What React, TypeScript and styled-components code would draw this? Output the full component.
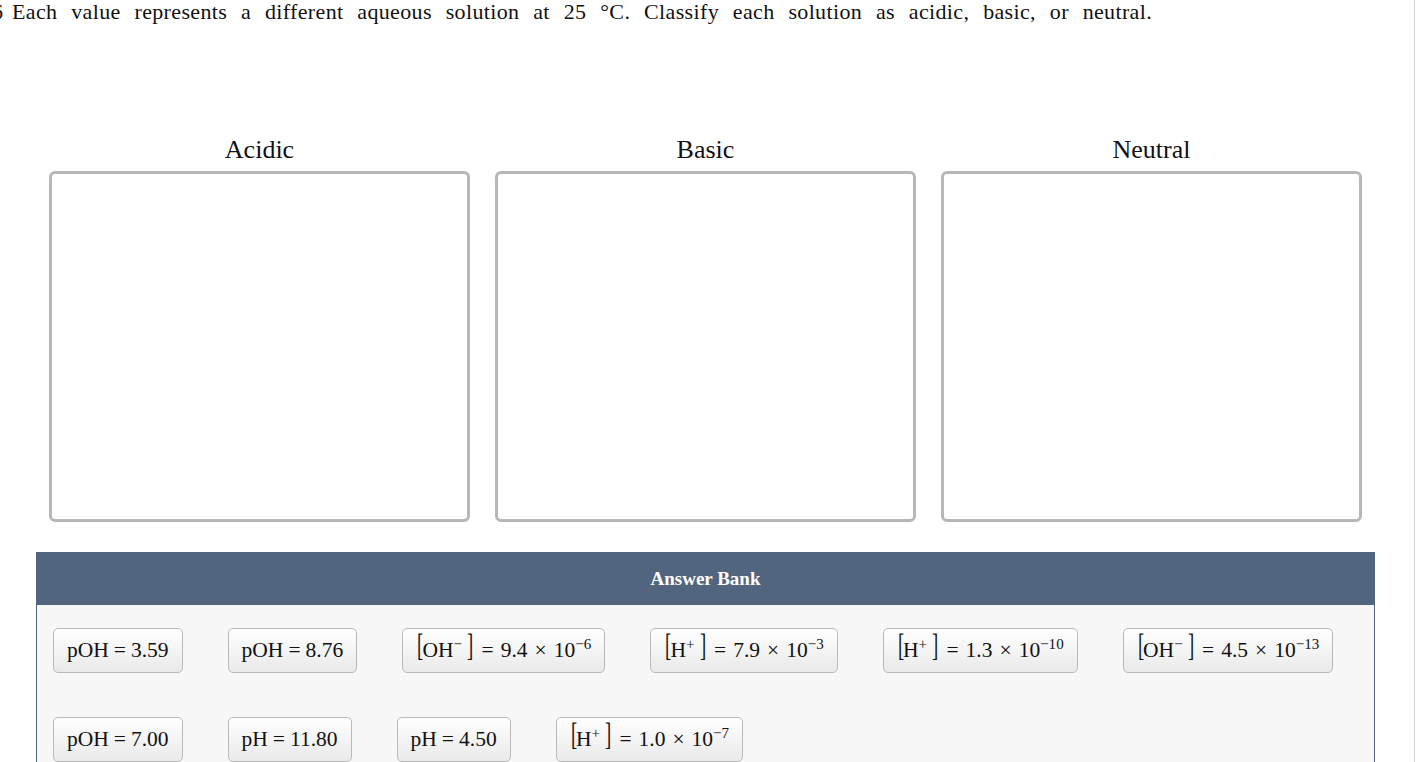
import React from 'react';
import styled, { createGlobalStyle } from 'styled-components';

const GlobalStyle = createGlobalStyle`
    html, body {
        margin: 0;
        padding: 0;
        background: #fff;
        overflow: hidden;
    }
    body {
        font-family: "Liberation Serif", "Times New Roman", serif;
        color: #111;
    }
`;

const Page = styled.div`
    width: 1414px;
    height: 762px;
    border-right: 1px solid #d4d4d4;
    overflow: hidden;
`;

const Prompt = styled.p`
    margin: 0;
    padding-top: 1px;
    font-size: 22px;
    line-height: 22px;
    letter-spacing: 0.35px;
    word-spacing: 8px;
    white-space: nowrap;
`;

const PromptNumber = styled.span`
    display: inline-block;
    margin-left: -8px;
    width: 20px;
`;

const Zones = styled.div`
    display: grid;
    grid-template-columns: repeat(3, 421px);
    column-gap: 25px;
    margin: 112px 0 0 49px;
`;

const Zone = styled.div`
    display: flex;
    flex-direction: column;
    align-items: center;
`;

const ZoneLabel = styled.div`
    font-size: 26px;
    line-height: 30px;
    margin-bottom: 6px;
`;

const DropBox = styled.div`
    box-sizing: border-box;
    width: 421px;
    height: 351px;
    border: 3px solid #b7b7b7;
    border-radius: 6px;
    background: #fff;
`;

const Bank = styled.section`
    box-sizing: border-box;
    width: 1339px;
    margin: 30px 0 0 36px;
    border-left: 1px solid #51667e;
    border-right: 1px solid #51667e;
    background: #f7f7f7;
`;

const BankHeader = styled.div`
    height: 53px;
    margin: 0 -1px;
    background: #51667e;
    color: #fff;
    font-size: 19px;
    font-weight: 600;
    display: flex;
    align-items: center;
    justify-content: center;
`;

const ChipArea = styled.div`
    display: flex;
    flex-direction: column;
    gap: 44px;
    padding: 23px 16px 24px;
`;

const ChipRow = styled.div`
    display: flex;
    gap: 45px;
`;

const Chip = styled.div`
    box-sizing: border-box;
    height: 45px;
    padding: 0 13px;
    display: flex;
    align-items: center;
    white-space: nowrap;
    border: 1px solid #b9b9b9;
    border-radius: 5px;
    background: linear-gradient(#ffffff, #e9e9e9);
    font-size: 21.5px;
`;

const Formula = styled.span`
    line-height: 22px;
    padding-bottom: 1px;
`;

// tall thin brackets; line-height 0 keeps them out of the line box
const Bracket = styled.span<{ $close?: boolean }>`
    display: inline-block;
    font-size: 1.45em;
    line-height: 0;
    transform: scaleX(0.6) translateY(-1px);
    margin: ${props => (props.$close ? '0 -1px 0 3px' : '0 -3px 0 -1px')};
`;

const Sup = styled.sup`
    font-size: 0.7em;
    line-height: 0;
    vertical-align: 0.55em;
`;

const Op = styled.span<{ $wide?: boolean }>`
    margin: ${props => (props.$wide ? '0 7px' : '0 5px')};
`;

type Ion = 'H' | 'OH';

const Conc = ({ ion, mant, exp }: { ion: Ion; mant: string; exp: string }) => (
    <Formula>
        <Bracket>[</Bracket>
        {ion}
        <Sup>{ion === 'H' ? '+' : '−'}</Sup>
        <Bracket $close>]</Bracket>
        <Op $wide>=</Op>
        {mant}
        <Op $wide>×</Op>
        10<Sup>{exp}</Sup>
    </Formula>
);

const Plain = ({ name, value }: { name: string; value: string }) => (
    <Formula>
        {name}
        <Op>=</Op>
        {value}
    </Formula>
);

const App = () => (
    <Page>
        <GlobalStyle />
        <Prompt>
            <PromptNumber>6</PromptNumber>
            Each value represents a different aqueous solution at 25 °C. Classify each solution as acidic, basic, or neutral.
        </Prompt>
        <Zones>
            {['Acidic', 'Basic', 'Neutral'].map(label => (
                <Zone key={label}>
                    <ZoneLabel>{label}</ZoneLabel>
                    <DropBox />
                </Zone>
            ))}
        </Zones>
        <Bank>
            <BankHeader>Answer Bank</BankHeader>
            <ChipArea>
                <ChipRow>
                    <Chip><Plain name="pOH" value="3.59" /></Chip>
                    <Chip><Plain name="pOH" value="8.76" /></Chip>
                    <Chip><Conc ion="OH" mant="9.4" exp="−6" /></Chip>
                    <Chip><Conc ion="H" mant="7.9" exp="−3" /></Chip>
                    <Chip><Conc ion="H" mant="1.3" exp="−10" /></Chip>
                    <Chip><Conc ion="OH" mant="4.5" exp="−13" /></Chip>
                </ChipRow>
                <ChipRow>
                    <Chip><Plain name="pOH" value="7.00" /></Chip>
                    <Chip><Plain name="pH" value="11.80" /></Chip>
                    <Chip><Plain name="pH" value="4.50" /></Chip>
                    <Chip><Conc ion="H" mant="1.0" exp="−7" /></Chip>
                </ChipRow>
            </ChipArea>
        </Bank>
    </Page>
);

export default App;
